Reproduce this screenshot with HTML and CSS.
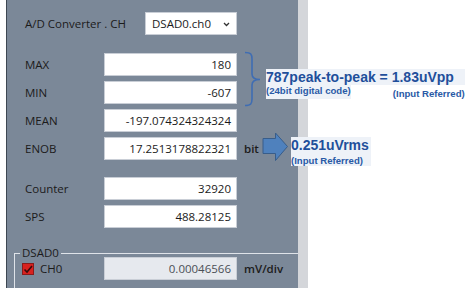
FILE: index.html
```html
<!DOCTYPE html>
<html>
<head>
<meta charset="utf-8">
<link rel="stylesheet" href="styles.css">
</head>
<body>
<div class="screen">
  <div class="edge"></div>
  <div class="panel">
    <div class="row row-top">
      <span class="lbl">A/D Converter . CH</span>
      <div class="select">
        <span>DSAD0.ch0</span>
        <svg class="chev" width="7" height="5" viewBox="0 0 7 5"><path d="M1 1 L3.5 3.5 L6 1" fill="none" stroke="#333" stroke-width="1.3"/></svg>
      </div>
    </div>
    <div class="stack stack-stats">
      <div class="row"><span class="lbl">MAX</span><div class="field">180</div></div>
      <div class="row"><span class="lbl">MIN</span><div class="field">-607</div></div>
      <div class="row"><span class="lbl">MEAN</span><div class="field">-197.074324324324</div></div>
      <div class="row"><span class="lbl">ENOB</span><div class="field">17.2513178822321</div><span class="unit">bit</span></div>
    </div>
    <div class="stack stack-count">
      <div class="row"><span class="lbl">Counter</span><div class="field">32920</div></div>
      <div class="row"><span class="lbl">SPS</span><div class="field">488.28125</div></div>
    </div>
    <div class="group">
      <div class="legend">DSAD0</div>
      <div class="row row-ch">
        <span class="lbl ch"><span class="check"><svg width="12" height="12" viewBox="0 0 12 12"><path d="M2.5 6.5 L5 9 L10 3" fill="none" stroke="#3a0a0a" stroke-width="1.6"/></svg></span>CH0</span>
        <div class="field disabled">0.00046566</div>
        <span class="unit">mV/div</span>
      </div>
    </div>
  </div>
  <div class="strip"></div>
  <div class="blank"></div>

  <svg class="brace" width="20" height="56" viewBox="0 0 20 56"><path d="M2 1.5 C8 1.5 9 3.5 9 8 L9 23 C9 26.5 11 28.5 17 28.5 C11 28.5 9 30.5 9 34 L9 48 C9 52.5 8 54.5 2 54.5" fill="none" stroke="#3f6db3" stroke-width="1.6"/></svg>
  <div class="note note-pp">
    <div class="big">787peak-to-peak = 1.83uVpp</div>
    <div class="subs"><span class="small">(24bit digital code)</span><span class="small ref">(Input Referred)</span></div>
  </div>
  <svg class="arrow" width="27" height="30" viewBox="0 0 27 30"><polygon points="1,6.5 13.5,6.5 13.5,1 25.5,14.5 13.5,28.5 13.5,21.5 1,21.5" fill="#4f81bd" stroke="#385d8a" stroke-width="1"/></svg>
  <div class="note note-rms">
    <div class="big">0.251uVrms</div>
    <div class="small">(Input Referred)</div>
  </div>
</div>
</body>
</html>
```
FILE: styles.css
```css
* { box-sizing: border-box; }
html, body { margin: 0; padding: 0; background: #fff; }
.screen {
  position: relative;
  width: 474px;
  height: 288px;
  overflow: hidden;
  display: flex;
  font-family: "Open Sans", "Noto Sans", sans-serif;
  font-size: 11.5px;
  color: #1b1b1b;
}
.edge { width: 6px; background: #fff; flex: none; }
.panel {
  width: 292px;
  flex: none;
  background: #7b8898;
  border-left: 1px solid #3e4752;
  padding: 12px 0 0 0;
  display: flex;
  flex-direction: column;
}
.strip { width: 10px; flex: none; background: #d4d6da; }
.blank { flex: 1; background: #fff; }

.row {
  display: grid;
  grid-template-columns: 79px 133px auto;
  align-items: center;
  height: 23px;
  padding-left: 18px;
}
.row-top { grid-template-columns: 120px 92px; }
.lbl { white-space: nowrap; }
.unit { padding-left: 7px; font-weight: 600; color: #1b1b1b; }

.select {
  height: 23px;
  background: #fff;
  border: 1px solid #c9ced6;
  display: flex;
  align-items: center;
  justify-content: space-between;
  padding: 0 6px 0 6px;
}
.chev { margin-top: 1px; }

.field {
  height: 23px;
  background: #fff;
  border: 1px solid #c9ced6;
  text-align: right;
  padding: 0 5px;
  line-height: 21px;
  white-space: nowrap;
}
.field.disabled {
  background: #e6e9ee;
  color: #4a4f56;
}

.stack { display: flex; flex-direction: column; gap: 5px; }
.stack-stats { margin-top: 18px; }
.stack-count { margin-top: 17px; }

.group {
  margin: 25px 0 0 7px;
  border: 1px solid #dfe3e9;
  border-right: none;
  border-bottom: none;
  height: 60px;
}
.legend {
  margin: -9px 0 0 5px;
  padding: 0 2px;
  width: fit-content;
  background: #7b8898;
  line-height: 16px;
}
.row-ch {
  margin-top: -4px;
  padding-left: 7px;
  grid-template-columns: 82px 133px auto;
}
.ch { display: flex; align-items: center; gap: 6px; }
.check {
  width: 12px;
  height: 12px;
  background: #d8211f;
  border: 1px solid #8a1a1a;
  display: flex;
}
.check svg { margin: -1px; }

.brace { position: absolute; left: 243px; top: 51px; }
.arrow { position: absolute; left: 262px; top: 132px; }
.note {
  position: absolute;
  font-family: "Liberation Sans", Arial, sans-serif;
  font-weight: bold;
  color: #1f4f9b;
}
.big { font-size: 14px; line-height: 16px; }
.small { font-size: 9.6px; line-height: 11px; color: #2a5aa6; }
.note-pp { left: 266px; top: 69px; }
.note-pp .big { background: #eef2f8; }
.subs { display: flex; }
.subs .small { background: #eef2f8; }
.subs .ref { margin-left: 42px; margin-top: 3px; background: none; }
.note-rms { left: 291px; top: 137px; background: #eef2f8; padding-right: 2px; }
.note-rms .small { margin-top: 2px; }
```
